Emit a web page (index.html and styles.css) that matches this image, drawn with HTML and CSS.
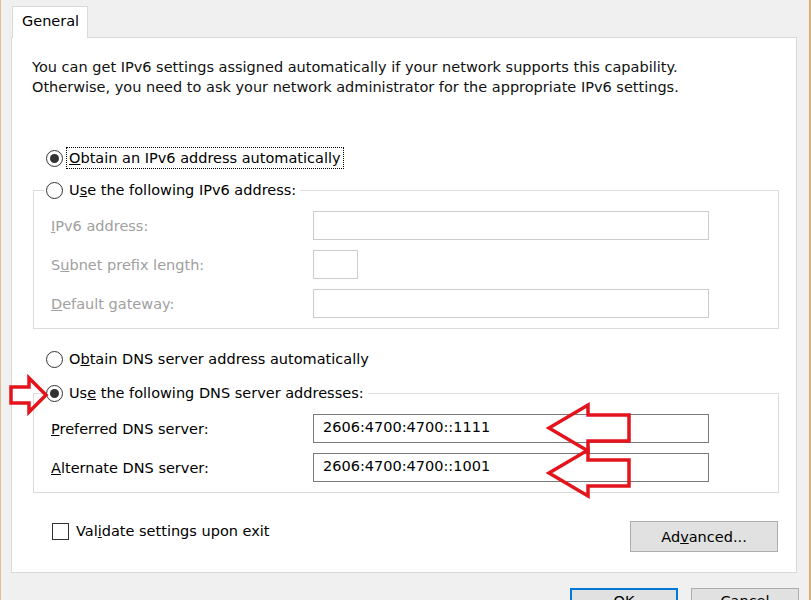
FILE: index.html
```html
<!DOCTYPE html>
<html lang="en">

<head>
    <meta charset="UTF-8">
    <meta name="viewport" content="width=device-width, initial-scale=1.0">
    <title>Internet Protocol Version 6 (TCP/IPv6) Properties</title>
    <link rel="stylesheet" href="styles.css">
</head>

<body>
    <div class="window">
        <div class="tabs">
            <div class="tab">General</div>
        </div>

        <div class="panel">
            <p class="desc">You can get IPv6 settings assigned automatically if your network supports this capability.<br>Otherwise, you need to ask your network administrator for the appropriate IPv6 settings.</p>

            <div class="radio-row first">
                <span class="radio checked"></span>
                <span class="focus"><u>O</u>btain an IPv6 address automatically</span>
            </div>

            <fieldset class="group">
                <legend class="radio-row">
                    <span class="radio"></span>
                    <span>U<u>s</u>e the following IPv6 address:</span>
                </legend>
                <div class="group-body">
                    <div class="field disabled">
                        <label><u>I</u>Pv6 address:</label>
                        <span class="box wide"></span>
                    </div>
                    <div class="field disabled">
                        <label>S<u>u</u>bnet prefix length:</label>
                        <span class="box short"></span>
                    </div>
                    <div class="field disabled">
                        <label><u>D</u>efault gateway:</label>
                        <span class="box wide"></span>
                    </div>
                </div>
            </fieldset>

            <div class="radio-row dns-auto">
                <span class="radio"></span>
                <span>O<u>b</u>tain DNS server address automatically</span>
            </div>

            <fieldset class="group dns">
                <legend class="radio-row">
                    <span class="radio checked"></span>
                    <span>Us<u>e</u> the following DNS server addresses:</span>
                </legend>
                <div class="group-body">
                    <div class="field">
                        <label><u>P</u>referred DNS server:</label>
                        <span class="box wide">2606:4700:4700::1111</span>
                    </div>
                    <div class="field">
                        <label><u>A</u>lternate DNS server:</label>
                        <span class="box wide">2606:4700:4700::1001</span>
                    </div>
                </div>
            </fieldset>

            <div class="footer-row">
                <div class="check-row">
                    <span class="checkbox"></span>
                    <span>Val<u>i</u>date settings upon exit</span>
                </div>
                <button class="btn advanced">Ad<u>v</u>anced...</button>
            </div>
        </div>

        <div class="dialog-buttons">
            <button class="btn ok">OK</button>
            <button class="btn">Cancel</button>
        </div>

        <!-- red hint arrows drawn over the dialog -->
        <svg class="arrows" width="811" height="600" viewBox="0 0 811 600">
            <path d="M10 387 H28 V378 L45 395 L28 412 V403 H10 Z" />
            <path d="M548 428 L587 405 V415 H628 V441 H587 V451 Z" />
            <path d="M548 473 L587 450 V460 H628 V486 H587 V496 Z" />
        </svg>
    </div>
</body>

</html>
```

FILE: styles.css
```css
* {
    box-sizing: border-box;
}

body {
    margin: 0;
    padding: 0;
    font-family: 'DejaVu Sans', Tahoma, sans-serif;
    font-size: 14.5px;
    color: #000;
    background-color: #f0f0f0;
}

.window {
    position: relative;
    width: 811px;
    height: 600px;
    overflow: hidden;
    background-color: #f0f0f0;
    border-left: 1px solid #ddbf94;
    border-right: 2px solid #d8b07a;
}

.tabs {
    display: flex;
    height: 38px;
    padding-left: 11px;
}

.tab {
    position: relative;
    z-index: 1;
    margin-top: 6px;
    width: 76px;
    height: 32px;
    padding: 6px 0 0 9px;
    background-color: #fff;
    border: 1px solid #d9d9d9;
    border-bottom: none;
}

.panel {
    margin: -1px 0 0 10px;
    width: 786px;
    height: 536px;
    padding: 0 17px 0 21px;
    background-color: #fff;
    border: 1px solid #d9d9d9;
}

.desc {
    margin: 19px 0 0 -1px;
    line-height: 20px;
    color: #111;
}

.radio-row {
    display: flex;
    align-items: center;
    height: 22px;
}

.radio-row.first {
    margin-top: 50px;
    padding-left: 13px;
}

.radio-row.dns-auto {
    margin-top: 19px;
    padding-left: 13px;
}

.radio {
    flex: none;
    position: relative;
    width: 17px;
    height: 17px;
    margin-right: 6px;
    border: 1px solid #333;
    border-radius: 50%;
    background-color: #fff;
}

.radio.checked::after {
    content: "";
    position: absolute;
    top: 3px;
    left: 3px;
    width: 9px;
    height: 9px;
    border-radius: 50%;
    background-color: #333;
}

.focus {
    outline: 1px dotted #000;
    padding: 0 2px;
    margin-left: -2px;
    line-height: 20px;
}

.group {
    margin: 10px 0 0;
    padding: 0;
    min-width: 0;
    border: 1px solid #dcdcdc;
}

.group.dns {
    margin-top: 12px;
}

.group legend {
    margin-left: 10px;
    padding: 0 4px 0 2px;
}

.group-body {
    display: flex;
    flex-direction: column;
    gap: 10px;
    padding: 10px 0 10px 17px;
}

.field {
    display: flex;
    align-items: center;
    height: 29px;
}

.field label {
    width: 262px;
}

.field.disabled label {
    color: #a0a0a0;
}

.box {
    height: 29px;
    padding: 4px 0 0 9px;
    background-color: #fff;
    border: 1px solid #7a7a7a;
}

.disabled .box {
    border-color: #cccccc;
}

.box.wide {
    width: 396px;
}

.box.short {
    width: 45px;
}

.footer-row {
    display: flex;
    align-items: flex-start;
    justify-content: space-between;
    margin-top: 28px;
    padding: 0 1px 0 19px;
}

.check-row {
    display: flex;
    align-items: center;
    height: 20px;
}

.checkbox {
    width: 17px;
    height: 17px;
    margin-right: 7px;
    border: 1px solid #333;
    background-color: #fff;
}

.btn {
    font-family: inherit;
    font-size: 14.5px;
    color: #000;
    height: 32px;
    background-color: #e1e1e1;
    border: 1px solid #adadad;
    padding: 0;
}

.btn.advanced {
    width: 148px;
    height: 31px;
}

.dialog-buttons {
    display: flex;
    justify-content: flex-end;
    gap: 13px;
    margin-top: 15px;
    padding-right: 10px;
}

.dialog-buttons .btn {
    width: 108px;
    height: 26px;
}

.btn.ok {
    border: 2px solid #0078d7;
}

.arrows {
    position: absolute;
    top: 0;
    left: 0;
    pointer-events: none;
}

.arrows path {
    fill: none;
    stroke: #e3141c;
    stroke-width: 3.5;
    stroke-linejoin: miter;
}
```
